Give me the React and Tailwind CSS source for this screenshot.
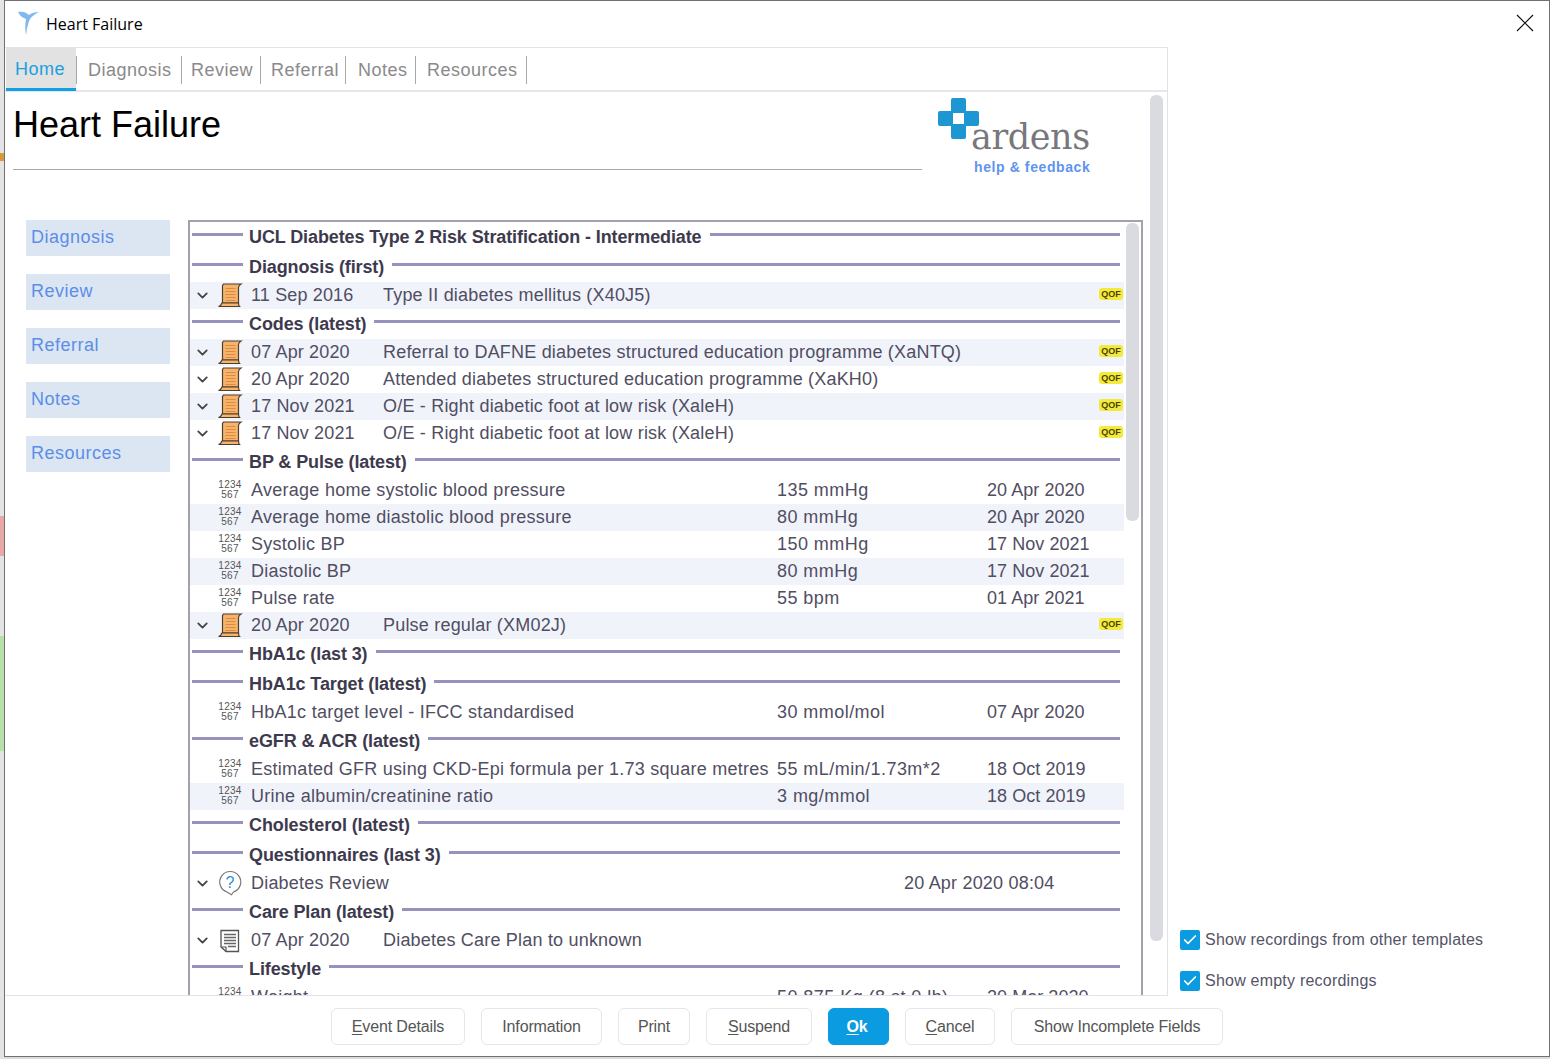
import React from "react";
import { ChevronDown, Check } from "lucide-react";

const font = { fontFamily: '"Liberation Sans", Arial, sans-serif' };

function ScrollIcon() {
  return (
    <svg width="26" height="26" viewBox="0 0 26 26" className="shrink-0 -mt-[2px]">
      <path d="M6.5 2 H24 C22.5 3 21.5 4 21.5 5.5 V21 H5.5 V3.5 Z" fill="#f6b36c" stroke="#4d3f2e" strokeWidth="1.2" />
      <path d="M1.5 24.5 C3.5 24 4.5 22.5 5 21 H21.5 C21.5 22.5 22 24 22.5 24.5 Z" fill="#f6b36c" stroke="#4d3f2e" strokeWidth="1.2" />
      <path d="M8.5 6.5 H18.5 M8.5 9.5 H18.5 M8.5 12.5 H18.5 M8.5 15.5 H18.5 M8.5 18.5 H18.5" stroke="#e08a3e" strokeWidth="1.2" />
    </svg>
  );
}

function NumIcon() {
  return (
    <div className="w-[26px] shrink-0 flex flex-col items-center text-[10px] leading-[10px] text-[#555] tracking-[0.3px] -mt-[1px]">
      <span>1234</span>
      <span>567</span>
    </div>
  );
}

function QuestionIcon() {
  return (
    <svg width="26" height="26" viewBox="0 0 26 26" className="shrink-0 -mt-[1px]">
      <path d="M10 22 A10.5 10.5 0 1 1 16.5 22 L14.5 24.8 Z" fill="#fff" stroke="#777" strokeWidth="1.2" />
      <text x="13" y="18" textAnchor="middle" fontSize="16" fill="#2f8fd8" fontFamily="Liberation Sans">?</text>
    </svg>
  );
}

function DocIcon() {
  return (
    <svg width="26" height="26" viewBox="0 0 26 26" className="shrink-0">
      <path d="M4 2.5 H21.5 V23.5 H9 L4 19 Z" fill="#fff" stroke="#555" strokeWidth="1.3" />
      <path d="M4 19 H9 V23.5" fill="none" stroke="#555" strokeWidth="1.2" />
      <path d="M7 6.5 H19 M7 9.5 H19 M7 12.5 H19 M7 15.5 H19 M11 18.5 H19" stroke="#666" strokeWidth="1.3" />
    </svg>
  );
}

function Qof() {
  return (
    <span className="absolute left-[909px] top-[6px] w-[24px] h-[12px] rounded-[3px] bg-[#f4ea3e] text-[#4a4400] text-[9px] leading-[12px] tracking-normal font-bold text-center">
      QOF
    </span>
  );
}

function Section({ title }) {
  return (
    <div className="h-[30px] flex items-center pl-[2px] pr-[5px]">
      <div className="w-[51px] h-[3px] bg-[#9592bd] -mt-[5px]" />
      <span className="ml-[6px] mr-[8px] text-[18px] font-bold text-[#3e3a4e] tracking-[-0.11px] whitespace-nowrap">{title}</span>
      <div className="flex-1 h-[3px] bg-[#9592bd] -mt-[5px]" />
    </div>
  );
}

function EventRow({ date, text, shaded, icon, qof = true }) {
  return (
    <div className={`relative h-[27px] flex items-center w-[934px] ${shaded ? "bg-[#f1f3fb]" : ""}`}>
      <ChevronDown size={17} strokeWidth={2.5} className="ml-[4px] w-[17px] shrink-0 text-[#444]" />
      <div className="ml-[6px] flex">{icon || <ScrollIcon />}</div>
      <span className="ml-[8px] w-[132px] shrink-0 tracking-[0.15px]">{date}</span>
      <span className="whitespace-nowrap">{text}</span>
      {qof && <Qof />}
    </div>
  );
}

function ValueRow({ name, value, date, shaded }) {
  return (
    <div className={`h-[27px] flex items-center w-[934px] ${shaded ? "bg-[#f1f3fb]" : ""}`}>
      <div className="ml-[27px]">
        <NumIcon />
      </div>
      <span className="ml-[8px] w-[526px] shrink-0 whitespace-nowrap tracking-[0.27px]">{name}</span>
      <span className="w-[210px] shrink-0 whitespace-nowrap tracking-[0.45px]">{value}</span>
      <span className="whitespace-nowrap tracking-[0.05px]">{date}</span>
    </div>
  );
}

function FormButton({ children, primary, className = "" }) {
  return (
    <button
      className={`h-[37px] pt-[1px] rounded-[6px] border text-[16px] tracking-[-0.15px] ${
        primary ? "bg-[#0a9be0] border-[#0a9be0] text-white font-bold pr-[3px]" : "bg-white border-[#e6e6ea] text-[#555]"
      } ${className}`}
    >
      {children}
    </button>
  );
}

function TabItem({ label, active, className }) {
  return (
    <div className={`h-[44px] flex items-center pt-[3px] ${className} ${active ? "bg-[#e2e2e2] border-b-[3px] border-[#0fa0e6]" : ""}`}>
      <span className={`text-[18px] tracking-[0.5px] ${active ? "text-[#1d9fe0]" : "text-[#8a8a8a]"}`}>{label}</span>
    </div>
  );
}

function TabDivider() {
  return <div className="w-[1px] h-[28px] bg-[#a8a8a8] mt-[2px]" />;
}

function SideLink({ label }) {
  return (
    <div className="w-[144px] h-[36px] bg-[#dce6f2] flex items-center pl-[5px] pb-[1px] text-[18px] tracking-[0.5px] text-[#5b8ee8]">
      {label}
    </div>
  );
}

function Checkline({ label }) {
  return (
    <div className="flex items-center h-[20px] gap-[5px] text-[16px] tracking-[0.22px] text-[#555366] whitespace-nowrap">
      <span className="w-[20px] h-[20px] rounded-[2px] bg-[#0a9be0] flex items-center justify-center">
        <Check size={16} strokeWidth={2.5} className="text-white" />
      </span>
      {label}
    </div>
  );
}

function Ul({ children }) {
  return <span className="underline underline-offset-2">{children}</span>;
}

export default function App() {
  return (
    <div style={font} className="w-[1550px] h-[1059px] flex overflow-hidden bg-[#dcdcdc]">
      <div className="w-[4px] shrink-0 flex flex-col bg-[#e4e4e4]">
        <div className="h-[153px]" />
        <div className="h-[8px] bg-[#d99a3a]" />
        <div className="h-[355px]" />
        <div className="h-[40px] bg-[#e8a8a8]" />
        <div className="h-[80px]" />
        <div className="h-[115px] bg-[#b8e0a8]" />
      </div>
      <div className="w-[1546px] h-[1057px] flex flex-col bg-white border-[1px] border-[#707070]">
        <div className="h-[46px] shrink-0 flex items-center relative">
          <svg width="24" height="26" viewBox="0 0 24 26" className="ml-[12px] mt-[-2px]">
            <path d="M1 2 C5 1 9 2 12 5 C14 3 18 2 22 2 C18 4 15 6 13 9 C11 13 10 18 9 25 C8 20 8 14 9 9 C6 8 3 6 1 2 Z" fill="#7fb9f0" />
          </svg>
          <span style={{ fontFamily: '"Open Sans", sans-serif' }} className="ml-[5px] text-[16px] text-black">Heart Failure</span>
          <svg width="18" height="18" viewBox="0 0 18 18" className="ml-auto mr-[15px] mt-[-3px]">
            <path d="M1 1 L17 17 M17 1 L1 17" stroke="#111" strokeWidth="1.2" />
          </svg>
        </div>

        <div className="flex-1 flex min-h-0">
          <div className="w-[1163px] shrink-0 flex flex-col border-r border-t border-b border-[#e2e2ea] overflow-hidden">
            <div className="h-[44px] shrink-0 flex items-center border-b-2 border-[#e6e6ec] pl-[1px]">
              <TabItem label="Home" active className="w-[70px] pl-[9px]" />
              <TabDivider />
              <TabItem label="Diagnosis" className="w-[104px] pl-[11px]" />
              <TabDivider />
              <TabItem label="Review" className="w-[78px] pl-[9px]" />
              <TabDivider />
              <TabItem label="Referral" className="w-[84px] pl-[10px]" />
              <TabDivider />
              <TabItem label="Notes" className="w-[69px] pl-[12px]" />
              <TabDivider />
              <TabItem label="Resources" className="w-[110px] pl-[11px]" />
              <TabDivider />
            </div>

            <div className="flex-1 min-h-0 flex">
              <div className="w-[1145px] shrink-0 flex flex-col min-h-0">
                <div className="h-[128px] shrink-0 flex">
                  <div className="w-[909px] ml-[8px] h-[78px] border-b border-[#a8a8a8] shrink-0">
                    <h1 className="text-[36px] leading-[41px] mt-[12px] text-black">Heart Failure</h1>
                  </div>
                  <div className="ml-[16px] mt-[6px] w-[160px]">
                    <div className="relative h-[54px]">
                      <div className="absolute left-[13px] top-0 w-[15px] h-[15px] rounded-[2px] bg-[#1e96d2]" />
                      <div className="absolute left-0 top-[13px] w-[15px] h-[15px] rounded-[2px] bg-[#1e96d2]" />
                      <div className="absolute left-[26px] top-[13px] w-[15px] h-[15px] rounded-[2px] bg-[#1e96d2]" />
                      <div className="absolute left-[13px] top-[26px] w-[15px] h-[15px] rounded-[2px] bg-[#1e96d2]" />
                      <div className="absolute left-[15px] top-[15px] w-[11px] h-[11px] bg-white" />
                      <span style={{ fontFamily: '"DejaVu Serif", serif' }} className="absolute left-[33px] top-[19px] text-[35px] leading-[40px] text-[#77777c] tracking-[-0.4px] font-light">ardens</span>
                    </div>
                    <div className="ml-[36px] mt-[5px] text-[14px] font-bold tracking-[0.6px] text-[#5f94ee] whitespace-nowrap">help &amp; feedback</div>
                  </div>
                </div>

                <div className="flex-1 min-h-0 flex">
                  <div className="w-[144px] ml-[21px] mr-[18px] shrink-0 flex flex-col gap-[18px]">
                    <SideLink label="Diagnosis" />
                    <SideLink label="Review" />
                    <SideLink label="Referral" />
                    <SideLink label="Notes" />
                    <SideLink label="Resources" />
                  </div>
                  <div className="w-[955px] shrink-0 border-l-2 border-t-2 border-r-2 border-[#a2a2aa] flex text-[18px] tracking-[0.2px] text-[#504e62] overflow-hidden">
                    <div className="w-[935px] shrink-0">
                      <Section title="UCL Diabetes Type 2 Risk Stratification - Intermediate" />
                      <Section title="Diagnosis (first)" />
                      <EventRow shaded date="11 Sep 2016" text="Type II diabetes mellitus (X40J5)" />
                      <Section title="Codes (latest)" />
                      <EventRow shaded date="07 Apr 2020" text="Referral to DAFNE diabetes structured education programme (XaNTQ)" />
                      <EventRow date="20 Apr 2020" text="Attended diabetes structured education programme (XaKH0)" />
                      <EventRow shaded date="17 Nov 2021" text="O/E - Right diabetic foot at low risk (XaleH)" />
                      <EventRow date="17 Nov 2021" text="O/E - Right diabetic foot at low risk (XaleH)" />
                      <Section title="BP & Pulse (latest)" />
                      <ValueRow name="Average home systolic blood pressure" value="135 mmHg" date="20 Apr 2020" />
                      <ValueRow shaded name="Average home diastolic blood pressure" value="80 mmHg" date="20 Apr 2020" />
                      <ValueRow name="Systolic BP" value="150 mmHg" date="17 Nov 2021" />
                      <ValueRow shaded name="Diastolic BP" value="80 mmHg" date="17 Nov 2021" />
                      <ValueRow name="Pulse rate" value="55 bpm" date="01 Apr 2021" />
                      <EventRow shaded date="20 Apr 2020" text="Pulse regular (XM02J)" />
                      <Section title="HbA1c (last 3)" />
                      <Section title="HbA1c Target (latest)" />
                      <ValueRow name="HbA1c target level - IFCC standardised" value="30 mmol/mol" date="07 Apr 2020" />
                      <Section title="eGFR & ACR (latest)" />
                      <ValueRow name="Estimated GFR using CKD-Epi formula per 1.73 square metres" value="55 mL/min/1.73m*2" date="18 Oct 2019" />
                      <ValueRow shaded name="Urine albumin/creatinine ratio" value="3 mg/mmol" date="18 Oct 2019" />
                      <Section title="Cholesterol (latest)" />
                      <Section title="Questionnaires (last 3)" />
                      <div className="h-[27px] flex items-center">
                        <ChevronDown size={17} strokeWidth={2.5} className="ml-[4px] shrink-0 text-[#444]" />
                        <div className="ml-[6px] flex"><QuestionIcon /></div>
                        <span className="ml-[8px] w-[653px] shrink-0">Diabetes Review</span>
                        <span className="whitespace-nowrap">20 Apr 2020 08:04</span>
                      </div>
                      <Section title="Care Plan (latest)" />
                      <EventRow date="07 Apr 2020" text="Diabetes Care Plan to unknown" icon={<DocIcon />} qof={false} />
                      <Section title="Lifestyle" />
                      <ValueRow name="Weight" value="50.875 Kg (8 st 0 lb)" date="20 Mar 2020" />
                    </div>
                    <div className="ml-[1px] mt-[1px] w-[13px] h-[298px] rounded-[6px] bg-[#d9dbe0]" />
                  </div>
                </div>
              </div>
              <div className="mt-[3px] w-[13px] h-[846px] rounded-[6px] bg-[#d9dbe0]" />
            </div>
          </div>

          <div className="flex-1 flex flex-col justify-end pl-[12px] pb-[5px] gap-[21px]">
            <Checkline label="Show recordings from other templates" />
            <Checkline label="Show empty recordings" />
          </div>
        </div>

        <div className="h-[60px] shrink-0 flex items-center gap-[16px] pl-[326px]">
          <FormButton className="w-[134px]"><Ul>E</Ul>vent Details</FormButton>
          <FormButton className="w-[121px]">Information</FormButton>
          <FormButton className="w-[72px]">Print</FormButton>
          <FormButton className="w-[106px]"><Ul>S</Ul>uspend</FormButton>
          <FormButton primary className="w-[61px]"><Ul>O</Ul>k</FormButton>
          <FormButton className="w-[90px]"><Ul>C</Ul>ancel</FormButton>
          <FormButton className="w-[212px]">Show Incomplete Fields</FormButton>
        </div>
      </div>
    </div>
  );
}
